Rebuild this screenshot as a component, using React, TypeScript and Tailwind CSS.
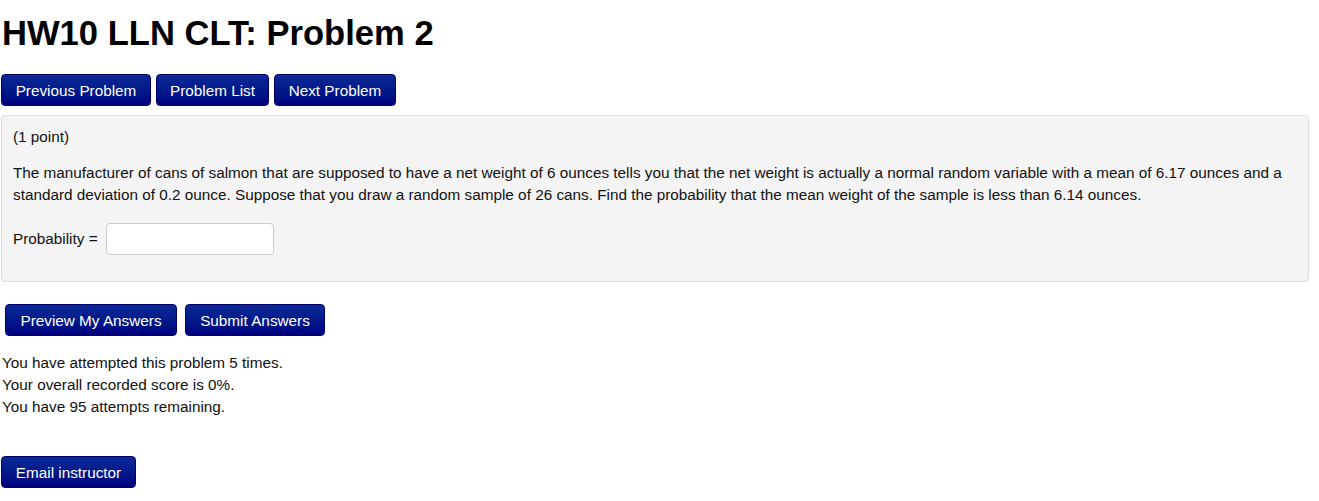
const btn =
  "h-8 whitespace-nowrap rounded-[4px] border border-[#000066] bg-gradient-to-b from-[#0c2a96] to-[#00007e] pt-px text-[15.3px] text-white leading-none";

export default function App() {
  return (
    <div className="min-h-screen bg-white font-['Liberation_Sans',Arial,sans-serif] text-[15.3px] text-[#111]">
      <div className="pl-[1px]">
        <h1 className="pt-[13px] pl-[1px] text-[34.6px] font-bold leading-[40px] text-black">
          HW10 LLN CLT: Problem 2
        </h1>

        <div className="mt-[21px] flex gap-[5px]">
          <button className={btn + " w-[150px]"}>Previous Problem</button>
          <button className={btn + " w-[113px]"}>Problem List</button>
          <button className={btn + " w-[122px]"}>Next Problem</button>
        </div>

        <div className="mt-[9px] w-[1308px] rounded-[4px] border border-[#dddddd] bg-[#f4f4f4] px-[11px] pt-[10px] pb-[26px] leading-[22px]">
          <p>(1 point)</p>
          <p className="mt-[14px]">
            The manufacturer of cans of salmon that are supposed to have a net weight of 6 ounces tells you that the
            net weight is actually a normal random variable with a mean of 6.17 ounces and a standard deviation of 0.2
            ounce. Suppose that you draw a random sample of 26 cans. Find the probability that the mean weight of the
            sample is less than 6.14 ounces.
          </p>
          <div className="mt-[17px] flex items-center gap-[8px]">
            <span>Probability =</span>
            <input
              type="text"
              className="h-8 w-[168px] rounded-[4px] border border-[#cccccc] bg-white px-2 outline-none"
            />
          </div>
        </div>

        <div className="mt-[22px] ml-[4px] flex gap-[8px]">
          <button className={btn + " w-[172px]"}>Preview My Answers</button>
          <button className={btn + " w-[140px]"}>Submit Answers</button>
        </div>

        <div className="mt-[16px] pl-[1px] leading-[22px]">
          <p>You have attempted this problem 5 times.</p>
          <p>Your overall recorded score is 0%.</p>
          <p>You have 95 attempts remaining.</p>
        </div>

        <div className="mt-[38px]">
          <button className={btn + " w-[135px]"}>Email instructor</button>
        </div>
      </div>
    </div>
  );
}
